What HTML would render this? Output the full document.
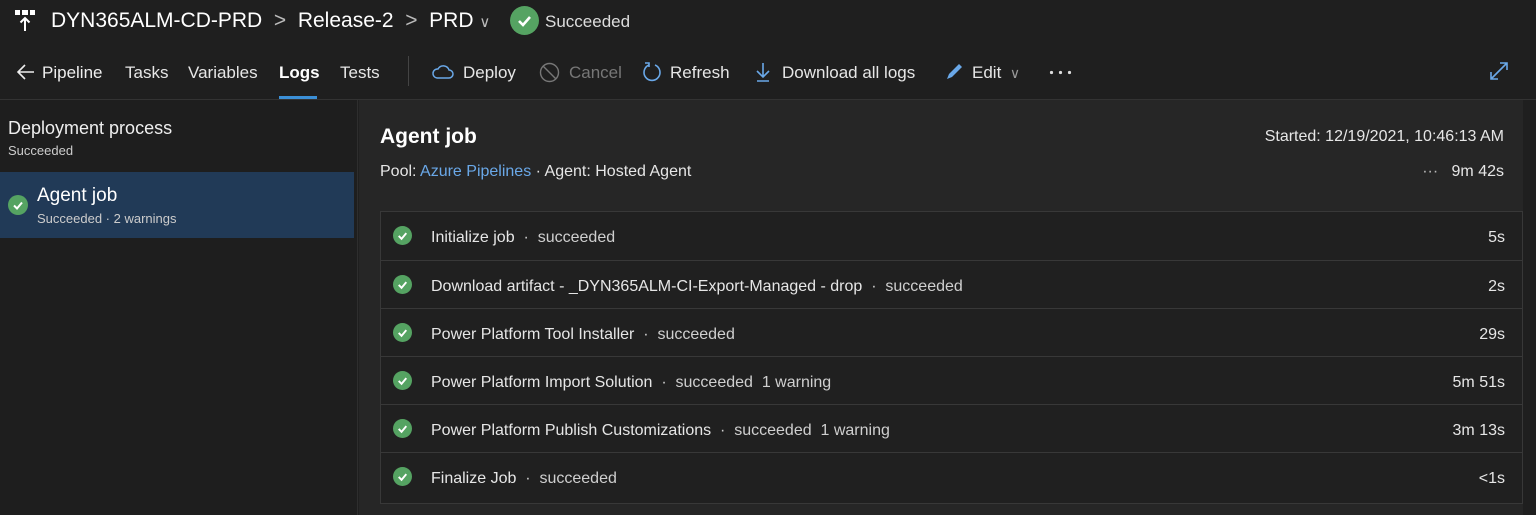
<!DOCTYPE html>
<html><head><style>
*{box-sizing:border-box;margin:0;padding:0}
body{width:1536px;height:515px;overflow:hidden;background:#1f1f1f;font-family:"Liberation Sans",sans-serif;color:#e6e6e6;position:relative}
.a{position:absolute;white-space:nowrap}
.chk{position:absolute;width:20px;height:20px;border-radius:50%;background:#55a362}
.chk svg{position:absolute;left:0;top:0}
.row{position:absolute;left:381px;width:1141px;height:48px;border-top:1px solid #383838;font-size:16px}
.row .t{position:absolute;left:50px;top:17px;color:#e6e6e6}
.row .t span{color:#cfcfcf}
.row .d{position:absolute;right:17px;top:17px}
.row .chk{left:12px;top:14px;width:19px;height:19px}
</style></head><body>
<svg class="a" style="left:14px;top:9px" width="24" height="24" viewBox="0 0 24 24"><rect x="1" y="1" width="5" height="5" fill="#fff"/><rect x="8" y="1" width="6" height="5" fill="#fff"/><rect x="16" y="1" width="5" height="5" fill="#fff"/><path d="M11 22V9M6.5 13.5L11 9l4.5 4.5" stroke="#fff" stroke-width="2" fill="none"/></svg>
<div class="a" style="left:51px;top:9px;font-size:21px;color:#fff">DYN365ALM-CD-PRD <span style="color:#bbb">&nbsp;&gt;&nbsp;</span> Release-2 <span style="color:#bbb">&nbsp;&gt;&nbsp;</span> PRD <span style="color:#bbb;font-size:15px">&#8744;</span></div>
<div class="chk" style="left:510px;top:6px;width:29px;height:29px"><svg width="29" height="29" viewBox="0 0 29 29"><path d="M9 15l4 4 7-8" stroke="#fff" stroke-width="2.6" fill="none"/></svg></div>
<div class="a" style="left:545px;top:12px;font-size:17px;color:#ddd">Succeeded</div>
<svg class="a" style="left:16px;top:63px" width="20" height="18" viewBox="0 0 20 18"><path d="M18 9H2M9 2L2 9l7 7" stroke="#eee" stroke-width="1.6" fill="none"/></svg>
<div class="a" style="left:42px;top:63px;font-size:17px;color:#eee">Pipeline</div>
<div class="a" style="left:125px;top:63px;font-size:17px">Tasks</div>
<div class="a" style="left:188px;top:63px;font-size:17px">Variables</div>
<div class="a" style="left:279px;top:63px;font-size:17px;font-weight:bold;color:#fff">Logs</div>
<div class="a" style="left:279px;top:96px;width:38px;height:3px;background:#3b8fd6"></div>
<div class="a" style="left:340px;top:63px;font-size:17px">Tests</div>
<div class="a" style="left:408px;top:56px;width:1px;height:30px;background:#444"></div>
<svg class="a" style="left:432px;top:63px" width="22" height="18" viewBox="0 0 22 18"><path d="M5 15h12a4 4 0 0 0 0-8 6 6 0 0 0-11-1A4.5 4.5 0 0 0 5 15z" stroke="#6aa8e8" stroke-width="1.5" fill="none"/></svg>
<div class="a" style="left:463px;top:63px;font-size:17px">Deploy</div>
<svg class="a" style="left:539px;top:62px" width="21" height="21" viewBox="0 0 21 21"><circle cx="10.5" cy="10.5" r="9" stroke="#777" stroke-width="1.4" fill="none"/><path d="M4.5 4.5l12 12" stroke="#777" stroke-width="1.4"/></svg>
<div class="a" style="left:569px;top:63px;font-size:17px;color:#777">Cancel</div>
<svg class="a" style="left:642px;top:61px" width="20" height="22" viewBox="0 0 20 22"><path d="M7 4a8 8 0 1 0 6 0" stroke="#6aa8e8" stroke-width="1.6" fill="none"/><path d="M3 2h4v4" stroke="#6aa8e8" stroke-width="1.6" fill="none"/></svg>
<div class="a" style="left:670px;top:63px;font-size:17px">Refresh</div>
<svg class="a" style="left:754px;top:61px" width="18" height="22" viewBox="0 0 18 22"><path d="M9 2v14M3 10l6 6 6-6M3 20h12" stroke="#6aa8e8" stroke-width="1.6" fill="none"/></svg>
<div class="a" style="left:782px;top:63px;font-size:17px">Download all logs</div>
<svg class="a" style="left:944px;top:62px" width="20" height="20" viewBox="0 0 20 20"><path d="M3 17l2-5L15 2l3 3L8 15z" fill="#6aa8e8"/></svg>
<div class="a" style="left:972px;top:63px;font-size:17px">Edit <span style="color:#999;font-size:14px">&nbsp;&#8744;</span></div>
<svg class="a" style="left:1049px;top:70px" width="24" height="5" viewBox="0 0 24 5"><circle cx="2.5" cy="2.5" r="1.6" fill="#ddd"/><circle cx="11.5" cy="2.5" r="1.6" fill="#ddd"/><circle cx="20.5" cy="2.5" r="1.6" fill="#ddd"/></svg>
<svg class="a" style="left:1489px;top:61px" width="20" height="20" viewBox="0 0 20 20"><path d="M2 18L18 2M11 2h7v7M2 11v7h7" stroke="#6aa8e8" stroke-width="1.6" fill="none"/></svg>
<div class="a" style="left:0;top:99px;width:1536px;height:1px;background:#333"></div>
<div class="a" style="left:0;top:100px;width:358px;height:415px;background:#1e1e1e;border-right:1px solid #2e2e2e"></div>
<div class="a" style="left:8px;top:118px;font-size:18px;color:#eee">Deployment process</div>
<div class="a" style="left:8px;top:143px;font-size:13px;color:#ccc">Succeeded</div>
<div class="a" style="left:0;top:172px;width:354px;height:66px;background:#213a57"></div>
<div class="chk" style="left:8px;top:195px"><svg width="20" height="20" viewBox="0 0 20 20"><path d="M6 10.5l3 3 5-6" stroke="#fff" stroke-width="2" fill="none"/></svg></div>
<div class="a" style="left:37px;top:185px;font-size:19px;color:#fff">Agent job</div>
<div class="a" style="left:37px;top:211px;font-size:13px;color:#ccc">Succeeded · 2 warnings</div>
<div class="a" style="left:359px;top:100px;width:1164px;height:415px;background:#262626"></div>
<div class="a" style="left:380px;top:125px;font-size:21px;font-weight:bold;color:#fff">Agent job</div>
<div class="a" style="right:32px;top:128px;font-size:16px">Started: 12/19/2021, 10:46:13 AM</div>
<div class="a" style="left:380px;top:163px;font-size:16px">Pool: <span style="color:#6aa8e8">Azure Pipelines</span> · Agent: Hosted Agent</div>
<div class="a" style="right:32px;top:163px;font-size:16px"><span style="color:#bbb">···</span>&nbsp;&nbsp; 9m 42s</div>
<div class="a" style="left:380px;top:211px;width:1143px;height:293px;background:#202020;border:1px solid #383838"></div>
<div class="row" style="top:212px;border-top:none"><div class="chk"><svg width="19" height="19" viewBox="0 0 20 20"><path d="M6 10.5l3 3 5-6" stroke="#fff" stroke-width="2" fill="none"/></svg></div><div class="t">Initialize job &nbsp;<span>· &nbsp;succeeded</span></div><div class="d">5s</div></div>
<div class="row" style="top:260px"><div class="chk"><svg width="19" height="19" viewBox="0 0 20 20"><path d="M6 10.5l3 3 5-6" stroke="#fff" stroke-width="2" fill="none"/></svg></div><div class="t">Download artifact - _DYN365ALM-CI-Export-Managed - drop &nbsp;<span>· &nbsp;succeeded</span></div><div class="d">2s</div></div>
<div class="row" style="top:308px"><div class="chk"><svg width="19" height="19" viewBox="0 0 20 20"><path d="M6 10.5l3 3 5-6" stroke="#fff" stroke-width="2" fill="none"/></svg></div><div class="t">Power Platform Tool Installer &nbsp;<span>· &nbsp;succeeded</span></div><div class="d">29s</div></div>
<div class="row" style="top:356px"><div class="chk"><svg width="19" height="19" viewBox="0 0 20 20"><path d="M6 10.5l3 3 5-6" stroke="#fff" stroke-width="2" fill="none"/></svg></div><div class="t">Power Platform Import Solution &nbsp;<span>· &nbsp;succeeded &nbsp;1 warning</span></div><div class="d">5m 51s</div></div>
<div class="row" style="top:404px"><div class="chk"><svg width="19" height="19" viewBox="0 0 20 20"><path d="M6 10.5l3 3 5-6" stroke="#fff" stroke-width="2" fill="none"/></svg></div><div class="t">Power Platform Publish Customizations &nbsp;<span>· &nbsp;succeeded &nbsp;1 warning</span></div><div class="d">3m 13s</div></div>
<div class="row" style="top:452px"><div class="chk"><svg width="19" height="19" viewBox="0 0 20 20"><path d="M6 10.5l3 3 5-6" stroke="#fff" stroke-width="2" fill="none"/></svg></div><div class="t">Finalize Job &nbsp;<span>· &nbsp;succeeded</span></div><div class="d">&lt;1s</div></div>
</body></html>
